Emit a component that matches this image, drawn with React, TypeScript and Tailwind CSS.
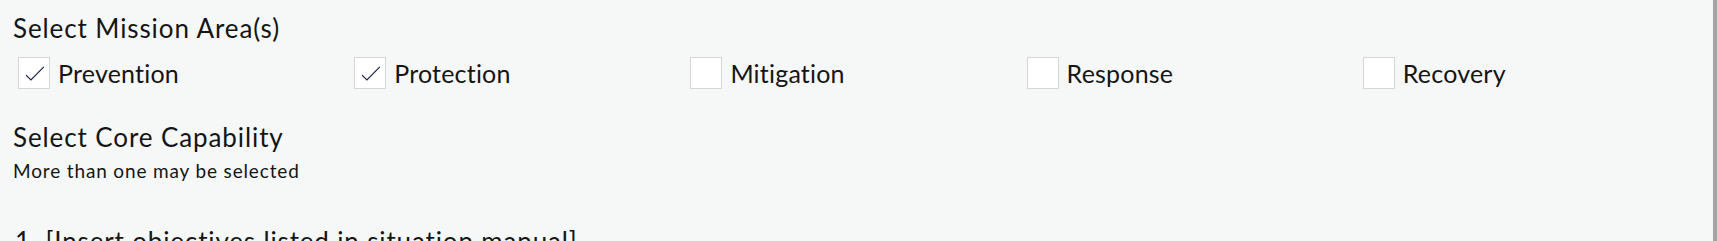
import React from "react";

const areas = [
  { label: "Prevention", checked: true },
  { label: "Protection", checked: true },
  { label: "Mitigation", checked: false },
  { label: "Response", checked: false },
  { label: "Recovery", checked: false },
];

function CheckBox({ checked }: { checked: boolean }) {
  return (
    <span className="flex h-8 w-8 shrink-0 items-center justify-center border border-[#d6d6d6] bg-white">
      {checked && (
        <svg width="32" height="32" viewBox="0 0 32 32" fill="none">
          <path
            d="M7.5 18.3L12.7 23.3L26.5 9.5"
            stroke="#1d2740"
            strokeWidth="1.3"
          />
        </svg>
      )}
    </span>
  );
}

export default function App() {
  return (
    <div
      className="h-[241px] w-full overflow-hidden border-r-4 border-[#a3a3a3] bg-[#f6f8f8] text-[#151515] [font-variant-ligatures:none]"
      style={{ fontFamily: "Lato, 'Noto Sans', sans-serif" }}
    >
      <div className="pl-[13px] pt-3">
        <h2 className="text-[26px] leading-8 tracking-[0.9px]">Select Mission Area(s)</h2>

        {/* Mission areas */}
        <div className="mt-[13px] grid grid-cols-5 pl-[5px] pr-[14px]">
          {areas.map((a) => (
            <label key={a.label} className="flex items-center gap-2">
              <CheckBox checked={a.checked} />
              <span className="text-[25px] leading-8 tracking-[0.2px]">{a.label}</span>
            </label>
          ))}
        </div>

        <h2 className="mt-8 text-[26px] leading-8 tracking-[0.9px]">Select Core Capability</h2>
        <p className="mt-[6px] text-[19px] leading-6 tracking-[0.85px]">
          More than one may be selected
        </p>

        <p className="mt-[42px] pl-[2px] text-[26px] leading-8 tracking-[0.85px]">
          1. [Insert objectives listed in situation manual]
        </p>
      </div>
    </div>
  );
}
